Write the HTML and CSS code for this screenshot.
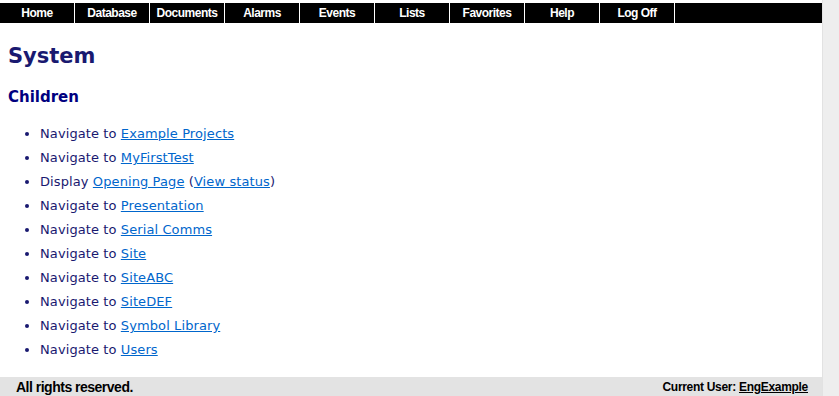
FILE: index.html
```html
<!DOCTYPE html>
<html lang="en">
<head>
  <meta charset="UTF-8">
  <meta name="viewport" content="width=device-width, initial-scale=1.0">
  <title>System</title>
  <link rel="stylesheet" href="styles.css">
</head>
<body>
  <div class="page">
    <!-- Top menu -->
    <div class="menu">
      <a class="menu-item" href="#">Home</a>
      <a class="menu-item" href="#">Database</a>
      <a class="menu-item" href="#">Documents</a>
      <a class="menu-item" href="#">Alarms</a>
      <a class="menu-item" href="#">Events</a>
      <a class="menu-item" href="#">Lists</a>
      <a class="menu-item" href="#">Favorites</a>
      <a class="menu-item" href="#">Help</a>
      <a class="menu-item" href="#">Log Off</a>
    </div>

    <div class="content">
      <h1>System</h1>
      <h2>Children</h2>
      <ul class="children">
        <li>Navigate to <a href="#">Example Projects</a></li>
        <li>Navigate to <a href="#">MyFirstTest</a></li>
        <li>Display <a href="#">Opening Page</a> (<a href="#">View status</a>)</li>
        <li>Navigate to <a href="#">Presentation</a></li>
        <li>Navigate to <a href="#">Serial Comms</a></li>
        <li>Navigate to <a href="#">Site</a></li>
        <li>Navigate to <a href="#">SiteABC</a></li>
        <li>Navigate to <a href="#">SiteDEF</a></li>
        <li>Navigate to <a href="#">Symbol Library</a></li>
        <li>Navigate to <a href="#">Users</a></li>
      </ul>
    </div>

    <!-- Footer -->
    <div class="footer">
      <span class="rights">All rights reserved.</span>
      <span class="user">Current User: <a href="#">EngExample</a></span>
    </div>
  </div>
  <div class="scrollbar"></div>
</body>
</html>
```

FILE: styles.css
```css
html, body {
  height: 100%;
}
body {
  margin: 0;
  display: flex;
  background-color: #fff;
  font-family: "DejaVu Sans", Verdana, sans-serif;
  overflow: hidden;
}
.page {
  width: 822px;
  height: 396px;
  display: flex;
  flex-direction: column;
}
.scrollbar {
  width: 16px;
  height: 396px;
  background-color: #eeeeee;
  border-left: 1px solid #e2e2e2;
}
.menu {
  margin-top: 3px;
  height: 20px;
  background-color: #000;
  display: flex;
}
.menu-item {
  width: 74px;
  border-right: 1px solid #fff;
  color: #fff;
  text-decoration: none;
  font-family: "Liberation Sans", Arial, sans-serif;
  font-weight: bold;
  font-size: 12px;
  letter-spacing: -0.5px;
  line-height: 21px;
  text-align: center;
}
.content {
  padding: 0 8px;
}
h1 {
  margin: 21px 0 0;
  font-size: 21px;
  line-height: 25px;
  color: #191970;
}
h2 {
  margin: 19px 0 0;
  font-size: 15px;
  line-height: 18px;
  color: #000080;
}
.children {
  margin: 16px 0 0;
  padding-left: 32px;
  color: #191970;
  font-size: 13px;
  letter-spacing: 0.1px;
}
.children li {
  line-height: 24px;
}
.children a {
  color: #0066cc;
}
.footer {
  margin-top: auto;
  height: 19px;
  background-color: #e3e3e3;
  padding: 1px 14px 0 16px;
  box-sizing: border-box;
  display: flex;
  justify-content: space-between;
  align-items: center;
  font-family: "Liberation Sans", Arial, sans-serif;
  font-weight: bold;
  color: #000;
}
.rights {
  font-size: 14px;
  letter-spacing: -0.5px;
}
.user {
  font-size: 12px;
  letter-spacing: -0.3px;
}
.user a {
  color: #000;
}
```
